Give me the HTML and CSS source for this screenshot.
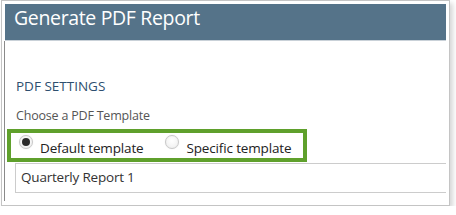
FILE: index.html
```html
<!DOCTYPE html>
<html>
<head>
<meta charset="utf-8">
<link rel="stylesheet" href="styles.css">
</head>
<body>
<div class="frame">
  <div class="header">Generate PDF Report</div>
  <div class="panel">
    <div class="section-title">PDF SETTINGS</div>
    <div class="label">Choose a PDF Template</div>
    <div class="radio-group">
      <div class="option first"><span class="radio checked"></span><span class="opt-text">Default template</span></div>
      <div class="option second"><span class="radio"></span><span class="opt-text">Specific template</span></div>
    </div>
    <div class="field">Quarterly Report 1</div>
  </div>
</div>
</body>
</html>
```
FILE: styles.css
```css
html, body {
  margin: 0;
  padding: 0;
  background: #ffffff;
}
body {
  font-family: "Open Sans", "Noto Sans", sans-serif;
}
.frame {
  margin-left: 1px;
  width: 441px;
  height: 201px;
  padding: 3px 3px 0 3px;
  border: 1px solid #c4c4c4;
  box-shadow: 3px 3px 5px rgba(0, 0, 0, 0.16);
  background: #fff;
}
.header {
  box-sizing: border-box;
  height: 37px;
  background: #557389;
  color: #ffffff;
  font-size: 19.5px;
  letter-spacing: -0.35px;
  line-height: 27px;
  padding-left: 9px;
  border-bottom: 1px solid #c9d1d8;
}
.panel {
  margin-left: -1px;
  border-left: 1px solid #8a8a8a;
  height: 160px;
  padding: 36px 0 0 11px;
  box-sizing: border-box;
}
.section-title {
  font-size: 13.5px;
  line-height: 18px;
  color: #2e4f6f;
}
.label {
  margin-top: 12px;
  font-size: 12.5px;
  letter-spacing: -0.2px;
  line-height: 18px;
  color: #555555;
}
.radio-group {
  margin-top: 4px;
  margin-left: -9px;
  width: 300px;
  height: 33px;
  box-sizing: border-box;
  border: 4px solid #5fa02c;
  display: flex;
  align-items: flex-start;
}
.option {
  display: flex;
  align-items: flex-start;
  height: 25px;
}
.option.first {
  margin-left: 8px;
}
.option.second {
  margin-left: 22px;
}
.radio {
  width: 14px;
  height: 14px;
  margin-top: 2px;
  border-radius: 50%;
  border: 1px solid #c8c8c8;
  background: radial-gradient(circle at 50% 40%, #ffffff 0%, #f2f2f2 70%, #e4e4e4 100%);
  box-sizing: border-box;
  display: flex;
  align-items: center;
  justify-content: center;
  box-shadow: 0 0 1px rgba(0, 0, 0, 0.15);
}
.radio.checked::after {
  content: "";
  width: 8px;
  height: 8px;
  border-radius: 50%;
  background: #2b2b2b;
}
.opt-text {
  margin-left: 7px;
  margin-top: 6px;
  font-size: 13.5px;
  letter-spacing: -0.15px;
  line-height: 18px;
  color: #222222;
}
.field {
  margin-top: 1px;
  margin-left: -1px;
  height: 30px;
  box-sizing: border-box;
  border-top: 1px solid #cccccc;
  border-bottom: 1px solid #cccccc;
  border-left: 1px solid #cccccc;
  padding-left: 5px;
  font-size: 13.5px;
  letter-spacing: -0.2px;
  line-height: 26px;
  color: #333333;
}
```
